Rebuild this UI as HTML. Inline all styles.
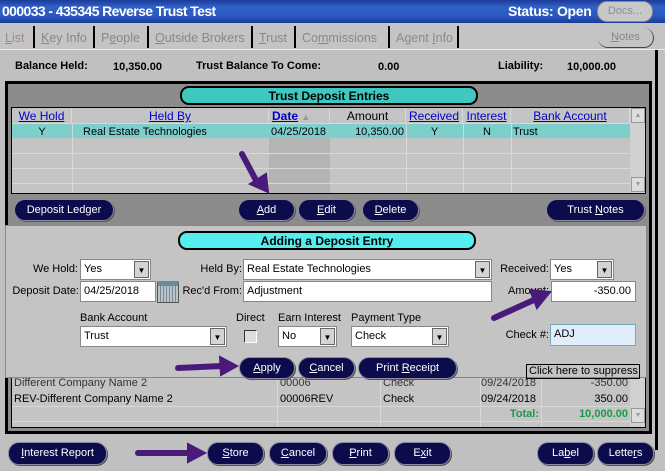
<!DOCTYPE html><html><head><style>
*{box-sizing:border-box;margin:0;padding:0}
body{width:665px;height:471px;background:#c0c0c0;font-family:"Liberation Sans",sans-serif;font-size:11px;position:relative;overflow:hidden;color:#000}
.a{position:absolute}
.btn{position:absolute;background:#0c0c4c;color:#fff;border-radius:11px;text-align:center;font-size:11px;border:1px solid #8a8aa0;box-shadow:1px 1px 0 #555;}
.pill{position:absolute;border:2px solid #000;border-radius:9px;text-align:center;font-weight:bold;font-size:12px}
.sel{position:absolute;background:#fff;border:1px solid #888;padding:3px 0 0 3px;font-size:11px}
.sel i{position:absolute;right:1px;top:1px;bottom:1px;width:15px;background:#d4d4d4;border:1px solid #666;font-style:normal;font-size:8px;text-align:center;line-height:17px}
.lbl{position:absolute;font-size:11px;text-align:right}
.cell{position:absolute;height:15px;border-right:1px solid #d8d8d8;border-bottom:1px solid #d8d8d8;padding:1px 3px;white-space:nowrap;overflow:hidden}
.tab{position:absolute;top:31px;font-size:12.5px;color:#888}
.sep{position:absolute;top:26px;width:2px;height:22px;background:#000}
u{text-decoration:underline}
</style></head><body>
<div class="a" style="left:0;top:0;width:665px;height:23px;background:linear-gradient(#1c3a9a,#2f62c8 30%,#2a58c0 70%,#1a3a96)"></div>
<div class="a" style="left:2px;top:3px;color:#fff;font-weight:bold;font-size:14px;letter-spacing:-0.6px">000033 - 435345 Reverse Trust Test</div>
<div class="a" style="left:508px;top:3px;color:#fff;font-weight:bold;font-size:14px;letter-spacing:-0.3px">Status: Open</div>
<div class="a" style="left:597px;top:1px;width:56px;height:21px;background:#c8c8c8;border-radius:10px;border:1px solid #888;color:#8a8a9a;text-align:center;font-size:11px;padding-top:3px">Docs...</div>
<div class="a" style="left:0;top:23px;width:665px;height:27px;background:#c4c4c4;border-bottom:1px solid #eee"></div>
<div class="tab" style="left:5px;color:#a08888"><u>L</u>ist</div><div class="sep" style="left:33px"></div>
<div class="tab" style="left:41px"><u>K</u>ey Info</div><div class="sep" style="left:93px"></div>
<div class="tab" style="left:101px">P<u>e</u>ople</div><div class="sep" style="left:147px"></div>
<div class="tab" style="left:155px"><u>O</u>utside Brokers</div><div class="sep" style="left:251px"></div>
<div class="tab" style="left:259px"><u>T</u>rust</div><div class="sep" style="left:294px"></div>
<div class="tab" style="left:302px">Co<u>m</u>missions</div><div class="sep" style="left:388px"></div>
<div class="tab" style="left:396px;color:#908888">Agent <u>I</u>nfo</div><div class="sep" style="left:457px"></div>
<div class="a" style="left:598px;top:28px;width:56px;height:20px;border-radius:10px;border-right:1px solid #444;border-bottom:1px solid #444;color:#888;text-align:center;padding-top:3px;font-size:11px"><u>N</u>otes</div>
<div class="a" style="left:655px;top:50px;width:3px;height:400px;background:#000"></div>
<div class="a" style="left:15px;top:60px;font-weight:bold;font-size:11px">Balance Held:</div>
<div class="a" style="left:113px;top:61px;font-weight:bold;font-size:11px">10,350.00</div>
<div class="a" style="left:196px;top:60px;font-weight:bold;font-size:11px">Trust Balance To Come:</div>
<div class="a" style="left:378px;top:61px;font-weight:bold;font-size:11px">0.00</div>
<div class="a" style="left:498px;top:60px;font-weight:bold;font-size:11px">Liability:</div>
<div class="a" style="left:567px;top:61px;font-weight:bold;font-size:11px">10,000.00</div>
<!-- frame -->
<div class="a" style="left:5px;top:81px;width:647px;height:353px;border:3px solid #000;background:#8c8c8c"></div>
<div class="pill" style="left:180px;top:86px;width:298px;height:19px;background:#3ec8c0;padding-top:1px">Trust Deposit Entries</div>
<div class="a" style="left:11px;top:107px;width:635px;height:87px;background:#c4c4c4;border:1px solid #000"></div>
<div class="a" style="left:12px;top:108px;width:618px;height:16px;background:#c4c4c4"></div>
<div class="cell" style="left:12px;top:108px;width:60px;text-align:center;color:#00c;text-decoration:underline;font-size:12px;height:16px">We Hold</div>
<div class="cell" style="left:72px;top:108px;width:197px;text-align:center;color:#00c;text-decoration:underline;font-size:12px;height:16px">Held By</div>
<div class="cell" style="left:269px;top:108px;width:61px;color:#00c;font-weight:bold;font-size:12px;height:16px"><u>Date</u> <span style="color:#999;font-size:9px">▲</span></div>
<div class="cell" style="left:330px;top:108px;width:76px;text-align:center;font-size:12px;height:16px">Amount</div>
<div class="cell" style="left:406px;top:108px;width:57px;text-align:center;color:#00c;text-decoration:underline;font-size:12px;height:16px;padding:1px 0">Received</div>
<div class="cell" style="left:463px;top:108px;width:48px;text-align:center;color:#00c;text-decoration:underline;font-size:12px;height:16px;padding:1px 0">Interest</div>
<div class="cell" style="left:511px;top:108px;width:119px;text-align:center;color:#00c;text-decoration:underline;font-size:12px;height:16px">Bank Account</div>
<div class="a" style="left:12px;top:124px;width:618px;height:14px;background:#7ecfcc"></div>
<div class="a" style="left:269px;top:138px;width:61px;height:55px;background:#b4b4b4"></div>
<div class="a" style="left:12px;top:126px;width:60px;text-align:center">Y</div>
<div class="a" style="left:83px;top:126px">Real Estate Technologies</div>
<div class="a" style="left:271px;top:126px">04/25/2018</div>
<div class="a" style="left:330px;top:126px;width:74px;text-align:right">10,350.00</div>
<div class="a" style="left:406px;top:126px;width:57px;text-align:center">Y</div>
<div class="a" style="left:463px;top:126px;width:48px;text-align:center">N</div>
<div class="a" style="left:513px;top:126px">Trust</div>
<div class="a" style="left:12px;top:153px;width:618px;border-top:1px solid #d8d8d8"></div>
<div class="a" style="left:12px;top:168px;width:618px;border-top:1px solid #d8d8d8"></div>
<div class="a" style="left:12px;top:183px;width:618px;border-top:1px solid #d8d8d8"></div>
<div class="a" style="left:72px;top:124px;height:69px;border-left:1px solid #d8d8d8"></div>
<div class="a" style="left:406px;top:124px;height:69px;border-left:1px solid #d8d8d8"></div>
<div class="a" style="left:463px;top:124px;height:69px;border-left:1px solid #d8d8d8"></div>
<div class="a" style="left:511px;top:124px;height:69px;border-left:1px solid #d8d8d8"></div>
<div class="a" style="left:630px;top:108px;width:15px;height:85px;background:#d0d0d0"></div>
<div class="a" style="left:631px;top:108px;width:14px;height:15px;background:#ddd;border:1px solid #999;font-size:7px;color:#999;text-align:center;line-height:13px">▲</div>
<div class="a" style="left:631px;top:177px;width:14px;height:15px;background:#ddd;border:1px solid #999;font-size:7px;color:#999;text-align:center;line-height:13px">▼</div>
<div class="btn" style="left:14px;top:199px;width:100px;height:22px;padding-top:4px">Deposit Ledger</div>
<div class="btn" style="left:238px;top:199px;width:57px;height:22px;padding-top:4px"><u>A</u>dd</div>
<div class="btn" style="left:298px;top:199px;width:57px;height:22px;padding-top:4px"><u>E</u>dit</div>
<div class="btn" style="left:362px;top:199px;width:57px;height:22px;padding-top:4px"><u>D</u>elete</div>
<div class="btn" style="left:546px;top:199px;width:99px;height:22px;padding-top:4px">Trust <u>N</u>otes</div>
<!-- lower list -->
<div class="a" style="left:11px;top:372px;width:635px;height:56px;background:#c4c4c4;border:1px solid #000"></div>
<div class="a" style="left:14px;top:377px;color:#333">Different Company Name 2</div>
<div class="a" style="left:280px;top:377px;color:#333">00006</div>
<div class="a" style="left:383px;top:377px;color:#333">Check</div>
<div class="a" style="left:481px;top:377px;color:#333">09/24/2018</div>
<div class="a" style="left:541px;top:377px;width:87px;text-align:right;color:#333">-350.00</div>
<div class="a" style="left:14px;top:393px">REV-Different Company Name 2</div>
<div class="a" style="left:280px;top:393px">00006REV</div>
<div class="a" style="left:383px;top:393px">Check</div>
<div class="a" style="left:481px;top:393px">09/24/2018</div>
<div class="a" style="left:541px;top:393px;width:87px;text-align:right">350.00</div>
<div class="a" style="left:480px;top:408px;width:59px;text-align:right;color:#1a9a4a;font-weight:bold">Total:</div>
<div class="a" style="left:541px;top:408px;width:87px;text-align:right;color:#1a9a4a;font-weight:bold">10,000.00</div>
<div class="a" style="left:12px;top:406px;width:618px;border-top:1px solid #d8d8d8"></div>
<div class="a" style="left:12px;top:421px;width:618px;border-top:1px solid #d8d8d8"></div>
<div class="a" style="left:277px;top:378px;height:49px;border-left:1px solid #d8d8d8"></div>
<div class="a" style="left:380px;top:378px;height:49px;border-left:1px solid #d8d8d8"></div>
<div class="a" style="left:480px;top:378px;height:49px;border-left:1px solid #d8d8d8"></div>
<div class="a" style="left:541px;top:378px;height:49px;border-left:1px solid #d8d8d8"></div>
<div class="a" style="left:630px;top:373px;width:15px;height:54px;background:#d0d0d0"></div>
<div class="a" style="left:631px;top:408px;width:14px;height:15px;background:#ddd;border:1px solid #999;font-size:7px;color:#999;text-align:center;line-height:13px">▼</div>
<!-- dialog -->
<div class="a" style="left:5px;top:225px;width:642px;height:153px;background:#c4c4c4;border:1px solid #888"></div>
<div class="pill" style="left:178px;top:231px;width:298px;height:19px;background:#55eeee;padding-top:1px">Adding a Deposit Entry</div>
<div class="lbl" style="left:10px;top:263px;width:68px">We Hold:</div>
<div class="sel" style="left:80px;top:259px;width:71px;height:21px">Yes<i>▼</i></div>
<div class="lbl" style="left:180px;top:263px;width:62px">Held By:</div>
<div class="sel" style="left:243px;top:259px;width:249px;height:21px">Real Estate Technologies<i>▼</i></div>
<div class="lbl" style="left:490px;top:263px;width:59px">Received:</div>
<div class="sel" style="left:550px;top:259px;width:64px;height:21px">Yes<i>▼</i></div>
<div class="lbl" style="left:5px;top:285px;width:74px">Deposit Date:</div>
<div class="sel" style="left:80px;top:281px;width:76px;height:21px">04/25/2018</div>
<div class="a" style="left:157px;top:281px;width:22px;height:22px;background:repeating-linear-gradient(90deg,#b8c4cc 0 2px,#7a8a96 2px 3px);border:1px solid #555;border-top:5px solid #6a8aa0"></div>
<div class="lbl" style="left:180px;top:285px;width:62px">Rec'd From:</div>
<div class="sel" style="left:243px;top:281px;width:249px;height:21px">Adjustment</div>
<div class="lbl" style="left:490px;top:285px;width:59px">Amount:</div>
<div class="sel" style="left:551px;top:281px;width:85px;height:21px;text-align:right;padding-right:4px">-350.00</div>
<div class="a" style="left:80px;top:312px">Bank Account</div>
<div class="a" style="left:236px;top:312px">Direct</div>
<div class="a" style="left:278px;top:312px">Earn Interest</div>
<div class="a" style="left:351px;top:312px">Payment Type</div>
<div class="sel" style="left:80px;top:326px;width:147px;height:21px">Trust<i>▼</i></div>
<div class="a" style="left:244px;top:330px;width:13px;height:13px;background:#ddd;border:1px solid #333;border-right-color:#fff;border-bottom-color:#fff"></div>
<div class="sel" style="left:278px;top:326px;width:59px;height:21px">No<i>▼</i></div>
<div class="sel" style="left:351px;top:326px;width:98px;height:21px">Check<i>▼</i></div>
<div class="lbl" style="left:490px;top:329px;width:59px">Check #:</div>
<div class="sel" style="left:550px;top:324px;width:86px;height:22px;background:#e0eefc;border-color:#7ab">ADJ</div>
<div class="btn" style="left:239px;top:357px;width:56px;height:22px;padding-top:4px"><u>A</u>pply</div>
<div class="btn" style="left:298px;top:357px;width:57px;height:22px;padding-top:4px"><u>C</u>ancel</div>
<div class="btn" style="left:358px;top:357px;width:99px;height:22px;padding-top:4px">Print <u>R</u>eceipt</div>
<div class="a" style="left:526px;top:364px;width:114px;height:15px;border:1px solid #000;font-size:11px;padding-left:2px">Click here to suppress</div>
<!-- bottom buttons -->
<div class="btn" style="left:8px;top:442px;width:99px;height:23px;padding-top:4px"><u>I</u>nterest Report</div>
<div class="btn" style="left:207px;top:442px;width:57px;height:23px;padding-top:4px"><u>S</u>tore</div>
<div class="btn" style="left:269px;top:442px;width:58px;height:23px;padding-top:4px"><u>C</u>ancel</div>
<div class="btn" style="left:332px;top:442px;width:57px;height:23px;padding-top:4px"><u>P</u>rint</div>
<div class="btn" style="left:394px;top:442px;width:57px;height:23px;padding-top:4px">E<u>x</u>it</div>
<div class="btn" style="left:537px;top:442px;width:57px;height:23px;padding-top:4px">La<u>b</u>el</div>
<div class="btn" style="left:597px;top:442px;width:57px;height:23px;padding-top:4px">Lette<u>r</u>s</div>
<svg class="a" style="left:0;top:0" width="665" height="471">
<g stroke="#4a1a7a" stroke-width="6" stroke-linecap="round" fill="#4a1a7a">
<line x1="242" y1="154" x2="258" y2="184"/><polygon points="250,184 268,192 266,174" stroke-width="2"/>
<line x1="494" y1="318" x2="536" y2="299"/><polygon points="530,290 550,292 537,308" stroke-width="2"/>
<line x1="178" y1="368" x2="222" y2="366"/><polygon points="220,357 237,366 221,375" stroke-width="2"/>
<line x1="138" y1="453" x2="190" y2="453"/><polygon points="188,444 205,453 188,462" stroke-width="2"/>
</g></svg>
</body></html>
